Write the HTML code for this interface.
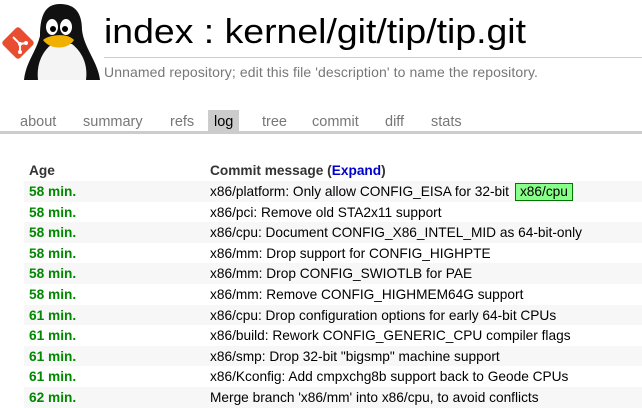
<!DOCTYPE html>
<html><head><meta charset="utf-8"><style>
body{margin:0;background:#fff;font-family:"Liberation Sans",sans-serif;width:642px;height:403px;overflow:hidden;position:relative;color:#333}
.t{position:absolute;white-space:nowrap}
#title{left:104px;top:13px;font-size:34px;color:#000;transform:scaleX(1.1);transform-origin:left top}
#desc{left:104px;top:64px;font-size:14px;color:#777;letter-spacing:0.1px}
#hr1{position:absolute;left:104px;top:57px;width:540px;height:1px;background:#ccc}
#tabs{position:absolute;left:0;top:110px;width:642px;height:21px;border-bottom:3px solid #ccc}
#tabs span{position:absolute;top:0;height:21px;line-height:25px;font-size:14.5px;color:#777;padding:0 6px}
#tabs span.a{background:#ccc;color:#000}
.row{position:absolute;left:24px;width:618px;height:20.6px;font-size:13.7px;line-height:21px;color:#000}
.row.s{background:#f7f7f7}
.row b{position:absolute;left:5px;color:#080;font-weight:bold}
.row i{font-style:normal;position:absolute;left:186px}
.dec{background:#8f8;border:1px solid #070;padding:0 4px;margin-left:6px;line-height:16px;display:inline-block}
</style></head><body>
<svg style="position:absolute;left:0;top:0" width="104" height="80" viewBox="0 0 104 80">
<g transform="translate(18,43) rotate(45)"><rect x="-12" y="-12" width="24" height="24" rx="3" fill="#e84d31"/></g>
<path d="M13 37 L20 44 M20 44 L20 51 M20 44 L26 43" stroke="#fff" stroke-width="2" fill="none"/>
<circle cx="20" cy="44" r="2" fill="#fff"/><circle cx="20" cy="52" r="2" fill="#fff"/><circle cx="26" cy="43" r="2" fill="#fff"/>
<path d="M24 80 C26 62 36 52 40 36 C40 14 46 4 60 4 C76 4 82 14 82 30 C84 48 98 62 100 80 Z" fill="#111"/>
<path d="M38 80 C36 62 44 50 52 44 L72 44 C82 52 88 64 86 80 Z" fill="#f4f4f4"/>
<ellipse cx="52" cy="27" rx="6" ry="8" fill="#fff"/><ellipse cx="66" cy="27" rx="6" ry="8" fill="#fff"/>
<circle cx="53" cy="29" r="3" fill="#000"/><circle cx="65" cy="29" r="3" fill="#000"/>
<path d="M43 40 C50 34 68 33 74 40 C68 50 50 50 43 40 Z" fill="#f0b000"/>
</svg>
<div class="t" id="title">index : kernel/git/tip/tip.git</div>
<div id="hr1"></div>
<div class="t" id="desc">Unnamed repository; edit this file 'description' to name the repository.</div>
<div id="tabs">
<span style="left:14px">about</span><span style="left:77px">summary</span><span style="left:164px">refs</span><span class="a" style="left:208px">log</span><span style="left:256px">tree</span><span style="left:306px">commit</span><span style="left:379px">diff</span><span style="left:425px">stats</span>
</div>
<div class="t" style="left:29px;top:163px;font-size:13.7px;font-weight:bold;color:#333">Age</div>
<div class="t" style="left:210px;top:163px;font-size:13.7px;font-weight:bold;color:#333">Commit message (<span style="color:#00c">Expand</span>)</div>
<div class="row s" style="top:181px"><b>58 min.</b><i>x86/platform: Only allow CONFIG_EISA for 32-bit<span class="dec">x86/cpu</span></i></div>
<div class="row" style="top:201.6px"><b>58 min.</b><i>x86/pci: Remove old STA2x11 support</i></div>
<div class="row s" style="top:222.2px"><b>58 min.</b><i>x86/cpu: Document CONFIG_X86_INTEL_MID as 64-bit-only</i></div>
<div class="row" style="top:242.8px"><b>58 min.</b><i>x86/mm: Drop support for CONFIG_HIGHPTE</i></div>
<div class="row s" style="top:263.4px"><b>58 min.</b><i>x86/mm: Drop CONFIG_SWIOTLB for PAE</i></div>
<div class="row" style="top:284px"><b>58 min.</b><i>x86/mm: Remove CONFIG_HIGHMEM64G support</i></div>
<div class="row s" style="top:304.6px"><b>61 min.</b><i>x86/cpu: Drop configuration options for early 64-bit CPUs</i></div>
<div class="row" style="top:325.2px"><b>61 min.</b><i>x86/build: Rework CONFIG_GENERIC_CPU compiler flags</i></div>
<div class="row s" style="top:345.8px"><b>61 min.</b><i>x86/smp: Drop 32-bit "bigsmp" machine support</i></div>
<div class="row" style="top:366.4px"><b>61 min.</b><i>x86/Kconfig: Add cmpxchg8b support back to Geode CPUs</i></div>
<div class="row s" style="top:387px"><b>62 min.</b><i>Merge branch 'x86/mm' into x86/cpu, to avoid conflicts</i></div>
</body></html>
